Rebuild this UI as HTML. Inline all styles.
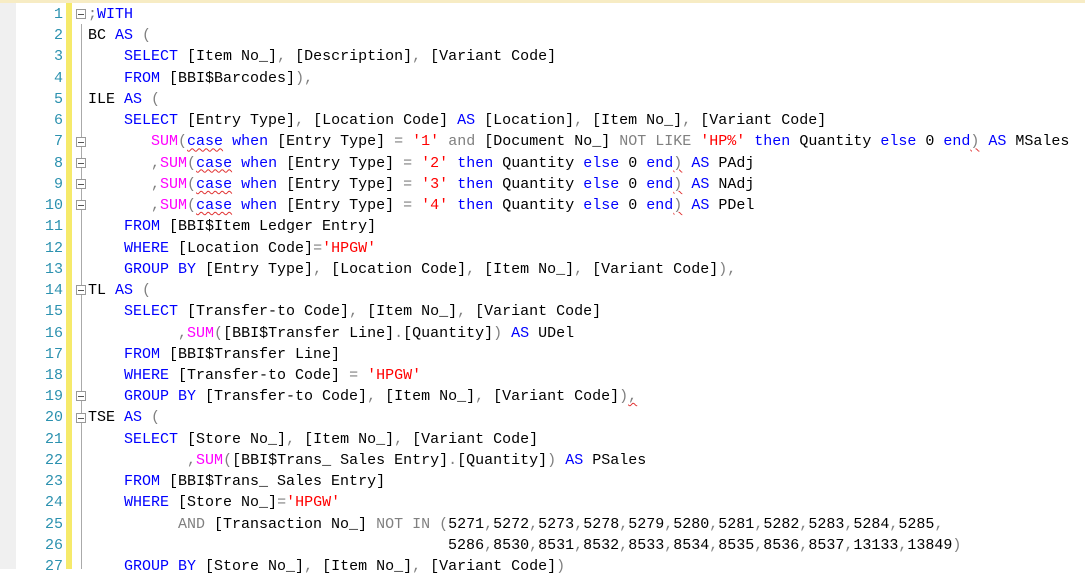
<!DOCTYPE html>
<html><head><meta charset="utf-8"><style>
html,body{margin:0;padding:0;width:1085px;height:569px;overflow:hidden;background:#fff;}
#top{position:absolute;left:0;top:0;width:1085px;height:3px;background:#f7ecc4;}
#lstrip{position:absolute;left:0;top:3px;width:16px;height:566px;background:#f0f0f0;}
#ybar{position:absolute;left:66px;top:3px;width:6px;height:566px;background:#f6ea6b;}
.ln{position:absolute;left:16px;width:47px;text-align:right;color:#2b91af;font:15px/21.24px "Liberation Mono",monospace;}
.code{position:absolute;left:88px;top:4px;font:15px/21.24px "Liberation Mono",monospace;color:#000;white-space:pre;}
.k{color:#0000ff}.s{color:#ff0000}.f{color:#ff00ff}.g{color:#808080}
.w{text-decoration:underline wavy #e03030;text-decoration-thickness:1px;text-underline-offset:2px}
.box{position:absolute;left:76px;width:8px;height:8px;border:1px solid #999;background:#fff;}
.box:after{content:"";position:absolute;left:1px;top:3.5px;width:6px;height:1px;background:#555;}
.vl{position:absolute;left:81px;width:1px;background:#aaa;}
.tk{position:absolute;left:81px;width:5px;height:1px;background:#aaa;}
</style></head><body>
<div id="top"></div><div id="lstrip"></div><div id="ybar"></div>
<div class="ln" style="top:4px">1<br>2<br>3<br>4<br>5<br>6<br>7<br>8<br>9<br>10<br>11<br>12<br>13<br>14<br>15<br>16<br>17<br>18<br>19<br>20<br>21<br>22<br>23<br>24<br>25<br>26<br>27</div>
<div class="vl" style="top:24px;height:545px"></div>
<div class="box" style="top:9px"></div>
<div class="box" style="top:137px"></div>
<div class="box" style="top:158px"></div>
<div class="box" style="top:179px"></div>
<div class="box" style="top:200px"></div>
<div class="box" style="top:285px"></div>
<div class="box" style="top:391px"></div>
<div class="box" style="top:413px"></div>
<div class="code"><span class="g">;</span><span class="k">WITH</span>
BC <span class="k">AS</span> <span class="g">(</span>
    <span class="k">SELECT</span> [Item No_]<span class="g">,</span> [Description]<span class="g">,</span> [Variant Code]
    <span class="k">FROM</span> [BBI$Barcodes]<span class="g">),</span>
ILE <span class="k">AS</span> <span class="g">(</span>
    <span class="k">SELECT</span> [Entry Type]<span class="g">,</span> [Location Code] <span class="k">AS</span> [Location]<span class="g">,</span> [Item No_]<span class="g">,</span> [Variant Code]
       <span class="f">SUM</span><span class="g">(</span><span class="k w">case</span> <span class="k">when</span> [Entry Type] <span class="g">=</span> <span class="s">'1'</span> <span class="g">and</span> [Document No_] <span class="g">NOT LIKE</span> <span class="s">'HP%'</span> <span class="k">then</span> Quantity <span class="k">else</span> 0 <span class="k">end</span><span class="g w">)</span> <span class="k">AS</span> MSales
       <span class="g">,</span><span class="f">SUM</span><span class="g">(</span><span class="k w">case</span> <span class="k">when</span> [Entry Type] <span class="g">=</span> <span class="s">'2'</span> <span class="k">then</span> Quantity <span class="k">else</span> 0 <span class="k">end</span><span class="g w">)</span> <span class="k">AS</span> PAdj
       <span class="g">,</span><span class="f">SUM</span><span class="g">(</span><span class="k w">case</span> <span class="k">when</span> [Entry Type] <span class="g">=</span> <span class="s">'3'</span> <span class="k">then</span> Quantity <span class="k">else</span> 0 <span class="k">end</span><span class="g w">)</span> <span class="k">AS</span> NAdj
       <span class="g">,</span><span class="f">SUM</span><span class="g">(</span><span class="k w">case</span> <span class="k">when</span> [Entry Type] <span class="g">=</span> <span class="s">'4'</span> <span class="k">then</span> Quantity <span class="k">else</span> 0 <span class="k">end</span><span class="g w">)</span> <span class="k">AS</span> PDel
    <span class="k">FROM</span> [BBI$Item Ledger Entry]
    <span class="k">WHERE</span> [Location Code]<span class="g">=</span><span class="s">'HPGW'</span>
    <span class="k">GROUP BY</span> [Entry Type]<span class="g">,</span> [Location Code]<span class="g">,</span> [Item No_]<span class="g">,</span> [Variant Code]<span class="g">),</span>
TL <span class="k">AS</span> <span class="g">(</span>
    <span class="k">SELECT</span> [Transfer-to Code]<span class="g">,</span> [Item No_]<span class="g">,</span> [Variant Code]
          <span class="g">,</span><span class="f">SUM</span><span class="g">(</span>[BBI$Transfer Line]<span class="g">.</span>[Quantity]<span class="g">)</span> <span class="k">AS</span> UDel
    <span class="k">FROM</span> [BBI$Transfer Line]
    <span class="k">WHERE</span> [Transfer-to Code] <span class="g">=</span> <span class="s">'HPGW'</span>
    <span class="k">GROUP BY</span> [Transfer-to Code]<span class="g">,</span> [Item No_]<span class="g">,</span> [Variant Code]<span class="g">)</span><span class="g w">,</span>
TSE <span class="k">AS</span> <span class="g">(</span>
    <span class="k">SELECT</span> [Store No_]<span class="g">,</span> [Item No_]<span class="g">,</span> [Variant Code]
           <span class="g">,</span><span class="f">SUM</span><span class="g">(</span>[BBI$Trans_ Sales Entry]<span class="g">.</span>[Quantity]<span class="g">)</span> <span class="k">AS</span> PSales
    <span class="k">FROM</span> [BBI$Trans_ Sales Entry]
    <span class="k">WHERE</span> [Store No_]<span class="g">=</span><span class="s">'HPGW'</span>
          <span class="g">AND</span> [Transaction No_] <span class="g">NOT IN</span> <span class="g">(</span>5271<span class="g">,</span>5272<span class="g">,</span>5273<span class="g">,</span>5278<span class="g">,</span>5279<span class="g">,</span>5280<span class="g">,</span>5281<span class="g">,</span>5282<span class="g">,</span>5283<span class="g">,</span>5284<span class="g">,</span>5285<span class="g">,</span>
                                        5286<span class="g">,</span>8530<span class="g">,</span>8531<span class="g">,</span>8532<span class="g">,</span>8533<span class="g">,</span>8534<span class="g">,</span>8535<span class="g">,</span>8536<span class="g">,</span>8537<span class="g">,</span>13133<span class="g">,</span>13849<span class="g">)</span>
    <span class="k">GROUP BY</span> [Store No_]<span class="g">,</span> [Item No_]<span class="g">,</span> [Variant Code]<span class="g">)</span></div>
</body></html>
